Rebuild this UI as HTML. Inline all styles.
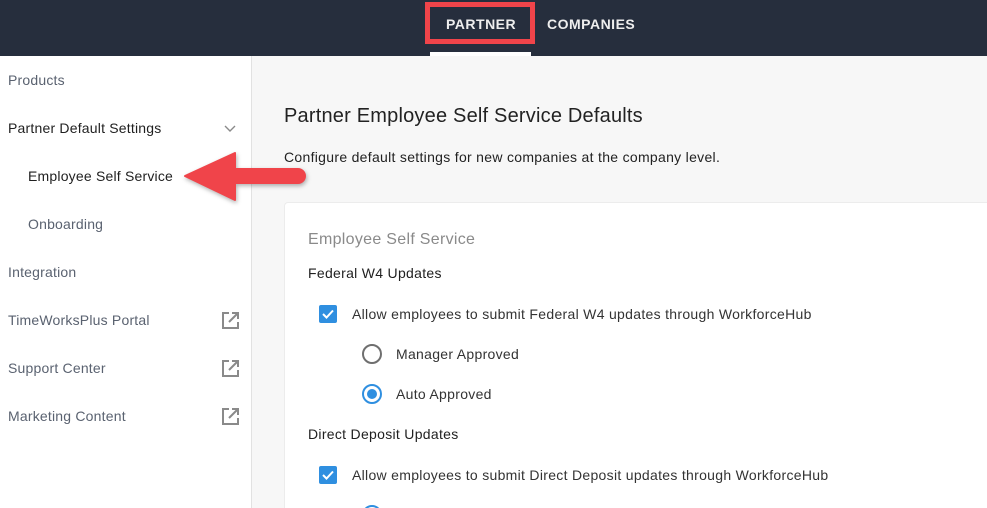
<!DOCTYPE html>
<html><head><meta charset="utf-8"><style>
*{margin:0;padding:0;box-sizing:border-box}
html{width:987px;height:508px;overflow:hidden}
body{width:987px;height:508px;overflow:hidden;background:#f7f7f7;font-family:"Liberation Sans",sans-serif;position:relative;color:#1f1f1f}
.hdr{position:absolute;left:0;top:0;width:987px;height:56px;background:#262e3d}
.nav{position:absolute;top:16px;color:#eee;font-weight:bold;font-size:14px;letter-spacing:0.5px}
.box{position:absolute;left:425px;top:2px;width:110px;height:42px;border:5px solid #f0444a}
.ul{position:absolute;left:430px;top:52px;width:101px;height:4px;background:#fff}
.side{position:absolute;left:0;top:56px;width:252px;height:452px;background:#fff;border-right:1px solid #e2e2e2}
.si{position:absolute;left:8px;font-size:14px;color:#5a6270;letter-spacing:0.2px}
.t{position:absolute;white-space:nowrap}
.card{position:absolute;left:284px;top:202px;width:720px;height:306px;background:#fff;border-radius:4px 0 0 0;border:1px solid #ececec;border-bottom:none;border-right:none}
.cb{position:absolute;left:319px;width:18px;height:18px;background:#2f8fe0;border-radius:2px}
.rd{position:absolute;left:362px;width:20px;height:20px;border-radius:50%}
.ext{position:absolute;left:221px;width:19px;height:19px}
.c{letter-spacing:0.3px}
</style></head><body>
<div class="hdr"></div>
<div class="nav" style="left:446px">PARTNER</div>
<div class="nav" style="left:547px">COMPANIES</div>
<div class="box"></div>
<div class="ul"></div>
<div class="side"></div>
<div class="si t" style="top:72px">Products</div>
<div class="si t" style="top:120px;color:#1f1f1f">Partner Default Settings</div>
<svg style="position:absolute;left:223px;top:124px" width="14" height="10"><path d="M2 2l5 5 5-5" fill="none" stroke="#8a8a8a" stroke-width="1.4"/></svg>
<div class="si t" style="top:168px;left:28px;color:#1f1f1f">Employee Self Service</div>
<div class="si t" style="top:216px;left:28px">Onboarding</div>
<div class="si t" style="top:264px">Integration</div>
<div class="si t" style="top:312px">TimeWorksPlus Portal</div>
<div class="si t" style="top:360px">Support Center</div>
<div class="si t" style="top:408px">Marketing Content</div>
<svg class="ext" style="top:311px" viewBox="0 0 19 19"><path d="M8 2H2v15h15v-6M11 2h6v6M17 2L8 11" fill="none" stroke="#8a8a8a" stroke-width="2"/></svg>
<svg class="ext" style="top:359px" viewBox="0 0 19 19"><path d="M8 2H2v15h15v-6M11 2h6v6M17 2L8 11" fill="none" stroke="#8a8a8a" stroke-width="2"/></svg>
<svg class="ext" style="top:407px" viewBox="0 0 19 19"><path d="M8 2H2v15h15v-6M11 2h6v6M17 2L8 11" fill="none" stroke="#8a8a8a" stroke-width="2"/></svg>
<svg style="position:absolute;left:180px;top:148px" width="132" height="60"><path d="M5 28L55 5V21H118a7 7 0 0 1 0 14H55V52Z" fill="#f0444a" stroke="#f0444a" stroke-linejoin="round" stroke-width="2" style="filter:drop-shadow(1px 2px 2px rgba(0,0,0,.3))"/></svg>
<div class="t" style="left:284px;top:105px;font-size:20px;color:#222;letter-spacing:0.2px">Partner Employee Self Service Defaults</div>
<div class="t c" style="left:284px;top:149px;font-size:14px;color:#222">Configure default settings for new companies at the company level.</div>
<div class="card"></div>
<div class="t c" style="left:308px;top:231px;font-size:16px;color:#8a8a8a">Employee Self Service</div>
<div class="t c" style="left:308px;top:265px;font-size:14px">Federal W4 Updates</div>
<div class="cb" style="top:305px"><svg width="18" height="18"><path d="M4 9l3.5 3.5L14 5.5" fill="none" stroke="#fff" stroke-width="2"/></svg></div>
<div class="t c" style="left:352px;top:306px;font-size:14px;color:#333">Allow employees to submit Federal W4 updates through WorkforceHub</div>
<div class="rd" style="top:344px;border:2px solid #6f6f6f"></div>
<div class="t c" style="left:396px;top:346px;font-size:14px;color:#333">Manager Approved</div>
<div class="rd" style="top:384px;border:2px solid #2f8fe0"><div style="position:absolute;left:3px;top:3px;width:10px;height:10px;border-radius:50%;background:#2f8fe0"></div></div>
<div class="t c" style="left:396px;top:386px;font-size:14px;color:#333">Auto Approved</div>
<div class="t c" style="left:308px;top:426px;font-size:14px">Direct Deposit Updates</div>
<div class="cb" style="top:466px"><svg width="18" height="18"><path d="M4 9l3.5 3.5L14 5.5" fill="none" stroke="#fff" stroke-width="2"/></svg></div>
<div class="t c" style="left:352px;top:467px;font-size:14px;color:#333">Allow employees to submit Direct Deposit updates through WorkforceHub</div>
<div class="rd" style="top:505px;border:2px solid #2f8fe0"></div>
</body></html>
